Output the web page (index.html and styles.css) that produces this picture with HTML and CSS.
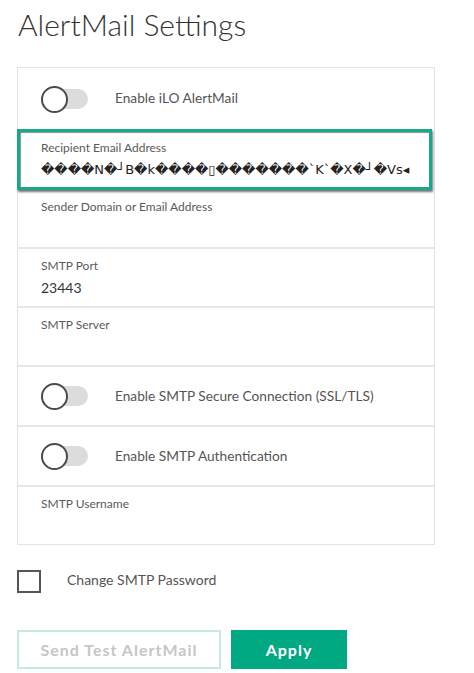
FILE: index.html
```html
<!DOCTYPE html>
<html>
<head>
<meta charset="utf-8">
<link rel="stylesheet" href="styles.css">
</head>
<body>
<div class="page">
  <h1 class="title">AlertMail Settings</h1>
  <div class="card">
    <div class="row toggle-row first">
      <span class="toggle"><span class="knob"></span></span>
      <span class="toggle-label">Enable iLO AlertMail</span>
    </div>
    <div class="row field focused">
      <div class="label">Recipient Email Address</div>
      <div class="value garbled">����N�┘B�k����▯�������`K`�X�┘�Vs◂</div>
    </div>
    <div class="row field short">
      <div class="label">Sender Domain or Email Address</div>
      <div class="value"></div>
    </div>
    <div class="row field">
      <div class="label">SMTP Port</div>
      <div class="value">23443</div>
    </div>
    <div class="row field">
      <div class="label">SMTP Server</div>
      <div class="value"></div>
    </div>
    <div class="row toggle-row">
      <span class="toggle"><span class="knob"></span></span>
      <span class="toggle-label">Enable SMTP Secure Connection (SSL/TLS)</span>
    </div>
    <div class="row toggle-row">
      <span class="toggle"><span class="knob"></span></span>
      <span class="toggle-label">Enable SMTP Authentication</span>
    </div>
    <div class="row field">
      <div class="label">SMTP Username</div>
      <div class="value"></div>
    </div>
  </div>
  <div class="check-row">
    <span class="checkbox"></span>
    <span class="check-label">Change SMTP Password</span>
  </div>
  <div class="buttons">
    <button class="btn btn-secondary">Send Test AlertMail</button>
    <button class="btn btn-primary">Apply</button>
  </div>
</div>
</body>
</html>
```
FILE: styles.css
```css
* { box-sizing: border-box; }
html, body { margin: 0; padding: 0; background: #fff; }
body { font-family: "Lato", "Noto Sans", sans-serif; color: #333; }
.page { padding: 0 17px; }
.title {
  margin: 0;
  padding-top: 4px;
  height: 67px;
  font-size: 30px;
  font-weight: 300;
  color: #333;
  line-height: 40px;
  padding-left: 1px;
}
.card {
  width: 418px;
  border: 1px solid #e2e2e2;
  display: flex;
  flex-direction: column;
}
.row {
  border-top: 2px solid #e6e6e6;
  height: 59px;
}
.row.first { border-top: none; height: 61px; }
.row.short { height: 57px; }
.toggle-row {
  display: flex;
  align-items: center;
  padding-left: 23px;
  height: 60px;
}
.toggle {
  position: relative;
  width: 47px;
  height: 20px;
  background: #dcdcdc;
  border-radius: 10px;
  flex: none;
}
.knob {
  position: absolute;
  left: 0;
  top: -3px;
  width: 27px;
  height: 27px;
  border-radius: 50%;
  background: #fff;
  border: 2px solid #4a4a4a;
}
.toggle-label {
  margin-left: 27px;
  font-size: 13.7px;
  color: #555;
  line-height: 18px;
  margin-top: -1px;
}
.field { padding: 9px 23px 0; }
.label {
  font-size: 12px;
  line-height: 16px;
  color: #5a5a5a;
}
.value {
  margin-top: 4px;
  font-size: 14px;
  line-height: 20px;
  color: #333;
  white-space: nowrap;
  min-height: 20px;
}
.focused {
  border: 3px solid #17a98a;
  margin-left: -1px;
  margin-right: 2px;
  height: 61px;
  padding: 8px 21px 0;
  box-shadow: 1px 2px 2px rgba(0,0,0,0.55), inset 1px 1px 1px rgba(0,0,0,0.45);
}
.focused + .row { border-top: none; }
.garbled { font-family: "DejaVu Sans", sans-serif; font-size: 13px; letter-spacing: 0; color: #222; }
.check-row {
  display: flex;
  align-items: center;
  margin-top: 24px;
  height: 24px;
}
.checkbox {
  width: 24px;
  height: 23px;
  border: 2px solid #555;
  flex: none;
}
.check-label {
  margin-left: 26px;
  font-size: 14px;
  color: #555;
  line-height: 18px;
  margin-top: -3px;
}
.buttons {
  display: flex;
  gap: 10px;
  margin-top: 37px;
}
.btn {
  height: 39px;
  font-family: "Lato", "Noto Sans", sans-serif;
  font-size: 16px;
  font-weight: 700;
  letter-spacing: 1px;
  border-radius: 0;
  cursor: pointer;
  padding: 0;
}
.btn-secondary {
  width: 204px;
  background: #fff;
  border: 2px solid #c4ebe0;
  color: #c6c6c6;
}
.btn-primary {
  width: 116px;
  background: #01a982;
  border: none;
  color: #fff;
}
```
